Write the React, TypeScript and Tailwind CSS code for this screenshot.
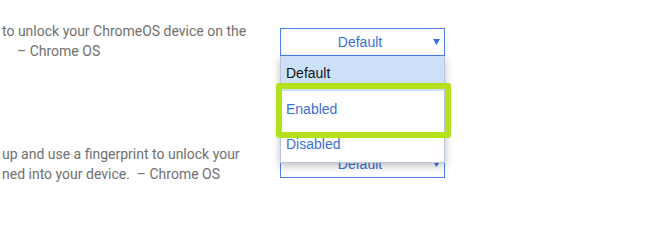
const font = { fontFamily: "Roboto, 'Liberation Sans', sans-serif" };

const Arrow = () => (
  <svg width="7" height="6" viewBox="0 0 7 6" className="shrink-0">
    <path d="M0 0 H7 L3.5 6 Z" fill="#3b6fd9" />
  </svg>
);

const Select = () => (
  <div className="flex items-center w-[165px] h-[28px] border border-[#4d7fe6] bg-white">
    <span className="flex-1 text-center pl-[6px] text-[14px] text-[#3d6fd8] [font-family:'Liberation_Sans',Arial,sans-serif]">
      Default
    </span>
    <div className="pr-[4px]">
      <Arrow />
    </div>
  </div>
);

const App = () => {
  return (
    <div className="relative w-[670px] h-[247px] bg-white overflow-hidden">
      <div className="flex pt-[21px]">
        <div className="w-[280px] text-[14px] leading-[20px] text-[#707070]" style={font}>
          <p className="pl-[2px] whitespace-pre">to unlock your ChromeOS device on the</p>
          <p className="pl-[17px] whitespace-pre">– Chrome OS</p>
        </div>
        <div className="pt-[7px]">
          <Select />
        </div>
      </div>

      <div className="flex pt-[83px]">
        <div className="w-[280px] text-[14px] leading-[20px] text-[#707070]" style={font}>
          <p className="pl-[2px] whitespace-pre">up and use a fingerprint to unlock your</p>
          <p className="pl-[2px] whitespace-pre">ned into your device.  – Chrome OS</p>
        </div>
        <div className="pt-[6px]">
          <Select />
        </div>
      </div>

      {/* open dropdown list */}
      <div className="absolute left-[280px] top-[56px] w-[165px] border-x border-b border-[#b7c4dc] bg-white shadow-[0_3px_8px_rgba(0,0,0,0.25)] text-[14px] [font-family:'Liberation_Sans',Arial,sans-serif]">
        <div className="h-[35px] flex items-center pl-[5px] bg-[#cce1f8] text-[#111]">Default</div>
        <div className="h-[36px] flex items-center pl-[5px] text-[#3d6fd8]">Enabled</div>
        <div className="h-[35px] flex items-center pl-[5px] text-[#3d6fd8]">Disabled</div>
      </div>

      {/* highlight annotation */}
      <div className="absolute left-[276px] top-[83px] w-[175px] h-[55px] border-[6px] border-[#b4e11c] rounded-[3px]" />
    </div>
  );
};

export default App;
